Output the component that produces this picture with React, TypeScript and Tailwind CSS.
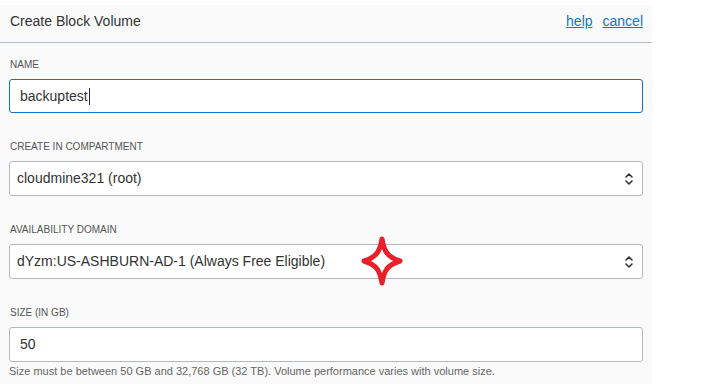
import React from "react";

// Chevron su/giu per le select
const UpDown: React.FC = () => (
  <svg width="10" height="14" viewBox="0 0 10 14" fill="none" stroke="#333" strokeWidth="1.6" strokeLinecap="round" strokeLinejoin="round">
    <path d="M2 5 L5 2 L8 5" />
    <path d="M2 9 L5 12 L8 9" />
  </svg>
);

interface FieldProps {
  label: string;
  children: React.ReactNode;
}

const Field: React.FC<FieldProps> = ({ label, children }) => (
  <div className="flex flex-col">
    <label className="h-[12px] pl-px text-[10px] leading-[15px] text-[#555]">{label}</label>
    <div className="mt-[10px]">{children}</div>
  </div>
);

const App: React.FC = () => {
  return (
    <div className="h-[384px] w-[714px] bg-white pt-[5px] font-['Liberation_Sans',Arial,sans-serif]">
      <div className="relative h-[379px] w-[652px] bg-[#fafafa]">
        {/* Header */}
        <div className="flex h-[38px] items-start justify-between border-b border-[#b6bcc8] pl-[10px] pr-[9px] pt-[8px]">
          <span className="text-[14px] leading-[16px] text-[#333]">Create Block Volume</span>
          <div className="flex gap-[10px] text-[14px] leading-[16px] text-[#1a73c8]">
            <a href="#" className="underline">help</a>
            <a href="#" className="underline">cancel</a>
          </div>
        </div>

        {/* Form */}
        <div className="flex flex-col gap-[26px] px-[9px] pt-[14px]">
          <Field label="NAME">
            <div className="flex h-[34px] items-center rounded-[3px] border border-[#1f6fc5] bg-white pl-[10px] text-[14px] text-[#333]">
              backuptest
              <span className="ml-px inline-block h-[17px] w-px bg-[#222]" />
            </div>
          </Field>

          <Field label="CREATE IN COMPARTMENT">
            <div className="flex h-[35px] items-center justify-between rounded-[3px] border border-[#b3b8c0] bg-white pl-[7px] pr-[8px] text-[14px] text-[#333]">
              <span>cloudmine321 (root)</span>
              <UpDown />
            </div>
          </Field>

          <Field label="AVAILABILITY DOMAIN">
            <div className="flex h-[35px] items-center justify-between rounded-[3px] border border-[#b3b8c0] bg-white pl-[7px] pr-[8px] text-[14px] text-[#333]">
              <span>dYzm:US-ASHBURN-AD-1 (Always Free Eligible)</span>
              <UpDown />
            </div>
          </Field>

          <div className="flex flex-col">
            <label className="h-[12px] pl-px text-[10px] leading-[15px] text-[#555]">SIZE (IN GB)</label>
            <div className="mt-[10px] flex h-[35px] items-center rounded-[3px] border border-[#b3b8c0] bg-white pl-[10px] text-[14px] text-[#333]">
              50
            </div>
            <p className="mt-[3px] text-[11px] leading-[12px] text-[#666]">
              Size must be between 50 GB and 32,768 GB (32 TB). Volume performance varies with volume size.
            </p>
          </div>
        </div>

        {/* Stella rossa di annotazione */}
        <svg className="absolute left-[361px] top-[231px]" width="42" height="50" viewBox="0 0 42 50">
          <path
            d="M21 3 C23 15 26 21 39 25 C26 29 23 35 21 47 C19 35 16 29 3 25 C16 21 19 15 21 3 Z"
            fill="white"
            stroke="#e8202a"
            strokeWidth="5"
            strokeLinejoin="round"
          />
        </svg>
      </div>
    </div>
  );
};

export default App;
